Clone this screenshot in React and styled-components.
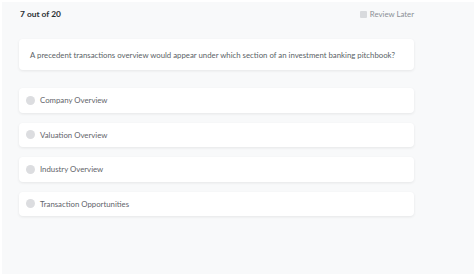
import styled, { createGlobalStyle } from "styled-components";

const GlobalStyle = createGlobalStyle`
  html, body {
    margin: 0;
    background: #ffffff;
  }
`;

const Page = styled.main`
  margin: 2px 0 0 2px;
  height: 272px;
  background: #f8f9fa;
  box-sizing: border-box;
  padding: 5px 0 0 17px;
  font-family: Lato, "Liberation Sans", sans-serif;
  color: #555a60;
`;

const Column = styled.div`
  width: 395px;
  display: flex;
  flex-direction: column;
`;

const Header = styled.header`
  display: flex;
  justify-content: space-between;
  align-items: center;
  height: 14px;
  padding-left: 1px;
`;

const Counter = styled.span`
  font-size: 8.4px;
  font-weight: 700;
  color: #2b2f33;
`;

const Review = styled.label`
  display: flex;
  align-items: center;
  gap: 3px;
  font-size: 7.8px;
  color: #8a8f95;
`;

const Box = styled.span`
  width: 7px;
  height: 7px;
  background: #d8dadd;
  border-radius: 1px;
`;

const Card = styled.div`
  background: #ffffff;
  border-radius: 4px;
  box-shadow: 0 1px 3px rgba(0, 0, 0, 0.08);
  display: flex;
  align-items: center;
  font-size: 7.8px;
`;

const Question = styled(Card)`
  margin-top: 18px;
  height: 31px;
  padding-left: 11px;
  color: #5a5f66;
`;

const Options = styled.div`
  margin-top: 18px;
  display: flex;
  flex-direction: column;
  gap: 10px;
`;

const Option = styled(Card)`
  height: 24.5px;
  padding-left: 7px;
  gap: 5px;
  color: #5f646a;
`;

const Radio = styled.span`
  width: 9px;
  height: 9px;
  border-radius: 50%;
  background: #dcdde0;
`;

const options = [
  "Company Overview",
  "Valuation Overview",
  "Industry Overview",
  "Transaction Opportunities",
];

export default function App() {
  return (
    <>
      <GlobalStyle />
      <Page>
        <Column>
          <Header>
            <Counter>7 out of 20</Counter>
            <Review>
              <Box />
              Review Later
            </Review>
          </Header>
          <Question>
            A precedent transactions overview would appear under which section of an investment banking pitchbook?
          </Question>
          <Options>
            {options.map((o) => (
              <Option key={o}>
                <Radio />
                {o}
              </Option>
            ))}
          </Options>
        </Column>
      </Page>
    </>
  );
}
